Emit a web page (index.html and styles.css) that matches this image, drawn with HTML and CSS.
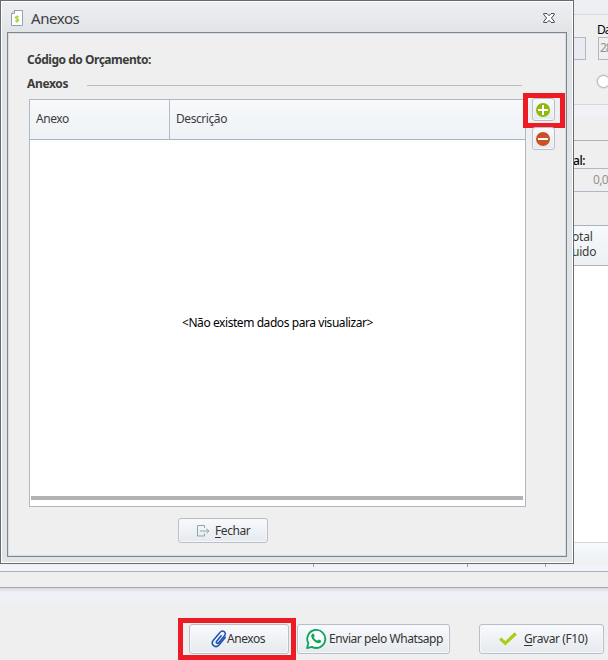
FILE: index.html
```html
<!DOCTYPE html>
<html lang="pt-BR">
<head>
<meta charset="utf-8">
<title>Anexos</title>
<link rel="stylesheet" href="styles.css">
</head>
<body>
<div class="app">
  <div class="strip"></div>
  <section class="dates">
    <div class="field field-empty"></div>
    <div class="date-col">
      <label class="date-label">Da</label>
      <div class="field field-date">28</div>
      <div class="radio"></div>
    </div>
  </section>
  <section class="band"></section>
  <section class="totals">
    <label class="total-label">al:</label>
    <div class="total-value">0,0</div>
  </section>
  <div class="grid-head">otal<br>uido</div>
  <div class="grid-body"></div>
  <div class="grid-foot"><i></i><i></i><i></i></div>
  <div class="gap"></div>
  <footer class="actions">
    <div class="mark">
      <button class="btn btn-attach">
        <svg width="16" height="18" viewBox="0 0 16 18" fill="none" stroke="#1d50b4" stroke-width="1.500" stroke-linecap="round"><path d="M10.200 5.800 5.700 11.200c-1.100 1.500.8 3 2 1.500l5.800-7c2.600-3.200-1.900-6.500-4.500-3.300L2.500 10c-3.600 4.500 2 9 5.700 4.700l6-7.300"/></svg><span>Anexos</span>
      </button>
    </div>
    <button class="btn btn-whats">
      <svg width="22" height="22" viewBox="0 0 22 22"><path d="M2.100 20.100 3.400 15.300A9 9 0 1 1 6.900 18.800Z" fill="#fff" stroke="#10a75c" stroke-width="1.900" stroke-linejoin="round"/><path d="M7.400 5.800c.7-.6 1.200-.4 1.500.3l.7 1.700c.2.700-.7 1.200-.8 1.600.8 1.500 1.900 2.500 3.500 3.200.6-.2 1.100-1.400 1.700-1.100l1.900.9c.6.4.2 1.600-.3 2.100-1.700 1.500-4.200.5-6-.9C7.800 12 6.300 10.100 6.200 8.300c0-1 .5-1.900 1.200-2.500Z" fill="#10a75c"/></svg><span>Enviar pelo Whatsapp</span>
    </button>
    <button class="btn btn-save">
      <svg width="18" height="14" viewBox="0 0 18 14" fill="none" stroke="#a9cd18" stroke-width="3.200"><path d="M1.200 6.600 6.300 11.300 16.800 1.500"/></svg><span><u>G</u>ravar (F10)</span>
    </button>
  </footer>
</div>

<div class="dialog">
  <header class="title">
    <svg class="doc" width="12" height="16" viewBox="0 0 12 16"><path d="M3.500.5h8v15H.5V3.500Z" fill="#fff" stroke="#8ba5ad"/><path d="M.5 3.500h3v-3" fill="#dfe7ea" stroke="#8ba5ad"/><path d="M7.900 7.100C6.500 6.100 4.300 6.300 4.400 7.700c.1 1.400 3.300.8 3.300 2.300C7.700 11.400 5.300 11.400 4 10.600M6 5.400v7.300" fill="none" stroke="#a5cc26" stroke-width="1.100"/></svg>
    <h1>Anexos</h1>
    <svg class="close" width="12" height="10" viewBox="0 0 12 10"><path d="M.7.6H4L6 2.700 8 .6h3.300v1L8.400 5l2.900 3.400v1H8L6 7.300 4 9.400H.7v-1L3.600 5 .7 1.600Z" fill="#fff" stroke="#42474d"/></svg>
  </header>
  <main class="panel">
    <p class="code">Código do Orçamento:</p>
    <div class="group"><span>Anexos</span><hr></div>
    <div class="work">
      <div class="table">
        <div class="thead"><div class="th th-a">Anexo</div><div class="th th-d">Descrição</div></div>
        <div class="empty">&lt;Não existem dados para visualizar&gt;</div>
        <div class="scroll"></div>
      </div>
      <div class="tools">
        <div class="mark mark-small"><button class="tool"><svg width="14" height="14" viewBox="0 0 14 14"><circle cx="7" cy="7" r="7" fill="#8fb90b"/><path d="M7 2v10M2 7h10" stroke="#fff" stroke-width="2"/></svg></button></div>
        <button class="tool tool-minus"><svg width="14" height="14" viewBox="0 0 14 14"><circle cx="7" cy="7" r="7" fill="#cb5124"/><path d="M2 7h10" stroke="#fff" stroke-width="2"/></svg></button>
      </div>
    </div>
    <button class="btn btn-close"><svg width="13" height="12" viewBox="0 0 13 12" fill="none" stroke="#8fa5ab"><path d="M7.500 3V.5h-7v10.500h7V8.500M3 6h9M9.500 3.700 12 6 9.500 8.300"/></svg><span><u>F</u>echar</span></button>
  </main>
</div>
</body>
</html>
```
FILE: styles.css
```css
* { box-sizing: border-box; }
body { margin: 0; overflow: hidden; font: 12px/16px "Noto Sans", sans-serif; letter-spacing: -0.43px; color: #3c3c3c; }
svg { display: block; flex: none; }
u { text-decoration: underline; text-underline-offset: 2px; text-decoration-thickness: 1px; }

.app { width: 608px; height: 660px; overflow: hidden; background: #efefef; display: flex; flex-direction: column; }
.app > * { flex: none; }
.strip { height: 15px; background: #eeeff2; border-bottom: 1px solid #d9dadd; }
.dates { height: 89px; padding-left: 574px; display: flex; overflow: hidden; }
.field { height: 23px; border: 1px solid #b0b8c7; background: #e9ebf1; }
.field-empty { width: 12px; margin: 22px 12px 0 0; border-left: 0; flex: none; }
.date-col { flex: none; width: 40px; }
.date-label { display: block; color: #000; margin: 7px 0 -1px -1px; letter-spacing: -1px; }
.field-date { color: #929292; padding: 2px 1px; background: #efefef; letter-spacing: -1px; }
.radio { width: 13px; height: 13px; margin: 15px 0 0 -1px; border: 1px solid #b5b5b5; border-radius: 50%; background: #fff; box-shadow: 0 0 0 1px #dedede; }
.band { height: 37px; border-top: 1px solid #d5d7dc; border-bottom: 1px solid #a9b0bd; background: linear-gradient(#f1f2f7 0 9px, #efefef 12px); }
.totals { height: 84px; padding: 12px 0 0 573px; }
.total-label { display: block; height: 15px; color: #000; font-weight: 500; }
.total-value { height: 24px; border: 1px solid #b0b8c7; border-width: 1px 0; color: #929292; padding: 3px 0 0 20px; letter-spacing: -0.7px; }
.grid-head { height: 41px; padding: 3px 0 0 572px; border: 1px solid #abb2be; border-width: 1px 0; background: linear-gradient(#f7f9fc, #edf1f4); line-height: 15px; letter-spacing: -0.2px; }
.grid-body { height: 276px; background: #fff; }
.grid-foot { height: 30px; display: flex; align-items: flex-end; padding: 0 0 4px 313px; border: 1px solid #abb2be; border-width: 1px 0; border-top-color: #d5d9df; background: linear-gradient(#f7f9fc, #edf1f4 22px, #f2f4f9 24px); }
.grid-foot i { flex: none; width: 1px; height: 6px; margin-right: 153px; background: #a0a6b1; }
.grid-foot i + i { margin-right: 77px; }
.gap { height: 15px; }
.actions { height: 73px; border-top: 1px solid #a3a6ad; padding-left: 178px; display: flex; background: linear-gradient(#d9dae0, #eff1f6 4px 14px, #efefef 15px); }

.btn, .tool { display: flex; align-items: center; padding: 0; font: inherit; letter-spacing: inherit; color: #333; border: 1px solid #b9bec9; border-radius: 3px; background: linear-gradient(#f8fafc, #eff2f5 50%, #e6e9ed); box-shadow: inset 0 0 0 1px #f5f8fa; white-space: nowrap; }
.mark { border: 5px solid #ed1c24; background: #efefef; }
.actions .mark { width: 118px; height: 42px; margin-top: 30px; padding: 1px 1px 0 6px; }
.btn-attach { width: 100px; height: 30px; padding-left: 21px; }
.btn-whats { width: 153px; height: 30px; margin: 36px 29px 0 1px; padding-left: 7px; }
.btn-whats span { margin-left: 2px; }
.btn-save { width: 125px; height: 30px; margin-top: 36px; padding-left: 19px; letter-spacing: -0.4px; }
.btn-save span { margin-left: 7px; }

.dialog { position: absolute; left: 0; top: 0; width: 574px; height: 564px; padding: 0 6px 6px; border: 1px solid #666b72; box-shadow: inset 0 0 0 1px #fff; background: linear-gradient(#eeeff2, #e1e4e6 32px); }
.title { height: 31px; display: flex; align-items: center; padding: 3px 12px 0 4px; }
.title h1 { flex: 1; margin: 0 0 0 8px; font-size: 15px; font-weight: 400; color: #3d4045; }
.panel { height: 525px; border: 1px solid #7c868f; box-shadow: inset 0 0 0 1px #d9dde1; background: #efefef; padding: 19px 0 0 19px; display: flex; flex-direction: column; }
.code { margin: 0 0 8px; height: 16px; font-weight: 700; letter-spacing: -0.48px; }
.group { display: flex; align-items: center; height: 16px; font-weight: 700; }
.group span { width: 60px; letter-spacing: -0.35px; }
.group hr { width: 435px; margin: 2px 0 0; border: 0; border-top: 1px solid #bdbdbd; }
.work { display: flex; height: 423px; padding-left: 2px; }
.table { width: 497px; height: 408px; margin-top: 7px; border: 1px solid #b0b8c2; background: #fff; display: flex; flex-direction: column; }
.thead { display: flex; height: 40px; border-bottom: 1px solid #abb3be; background: linear-gradient(#f7f9fb, #eef2f6); }
.th { padding: 11px 6px; }
.th-a { width: 140px; border-right: 1px solid #b4bcc5; }
.empty { flex: 1; display: flex; align-items: center; justify-content: center; color: #000; padding-top: 10px; }
.scroll { height: 4px; margin: 0 2px 6px 1px; background: #b2b2b2; }
.tools { margin-left: -3px; padding-top: 1px; width: 42px; position: relative; }
.mark-small { height: 35px; width: 42px; padding: 0 0 0 4px; background: linear-gradient(90deg, #eef1f5 2px, #efefef 2px); }
.tool { width: 23px; height: 23px; justify-content: flex-start; padding-left: 3px; }
.tool-minus { margin-left: 9px; margin-top: -1px; }
.btn-close { width: 90px; height: 25px; margin: 3px 0 0 151px; padding-left: 18px; }
.btn-close span { margin-left: 5px; }
```
